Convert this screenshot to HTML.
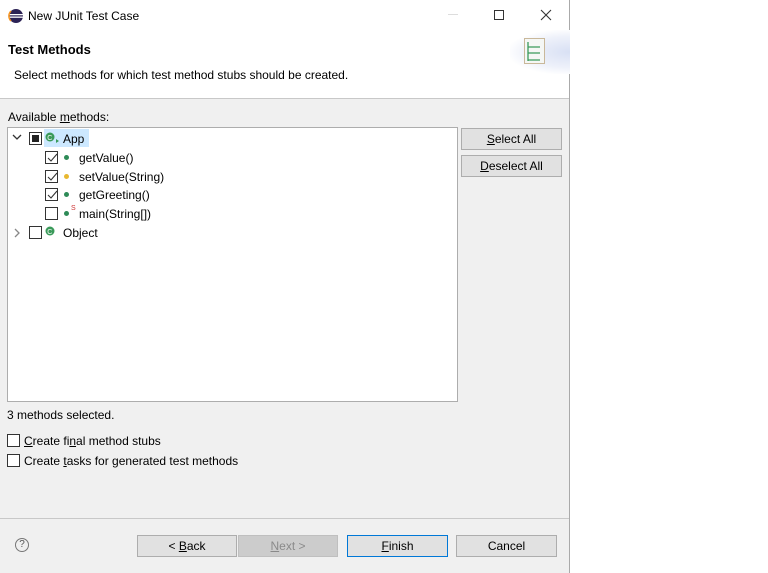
<!DOCTYPE html><html><head><style>
*{margin:0;padding:0;box-sizing:border-box}
body{width:768px;height:573px;background:#fff;font-family:"Liberation Sans",sans-serif;font-size:12px;color:#000;position:relative;overflow:hidden}
.a{position:absolute;white-space:nowrap}
.win{position:absolute;left:0;top:0;width:570px;height:573px;background:#f0f0f0;border-right:1px solid #aaa}
.cb{position:absolute;width:13px;height:13px;border:1px solid #333;background:#fff}
.btn{position:absolute;height:22px;background:#e1e1e1;border:1px solid #adadad;text-align:center;line-height:20px}
.dot{position:absolute;width:5px;height:5px;border-radius:50%;background:#2e8b57}
.ck{position:absolute;left:1px;top:1px}
</style></head><body>
<div class="win">
<div class="a" style="left:0;top:0;width:569px;height:99px;background:#fff;border-bottom:1px solid #c8c8c8"></div>
<svg class="a" style="left:8px;top:8px" width="16" height="16"><circle cx="8" cy="8" r="7" fill="#2c2255"/><rect x="1" y="6" width="14" height="1.3" fill="#fff"/><rect x="1" y="8.5" width="14" height="1.3" fill="#fff"/><path d="M3 3 A7 7 0 0 0 3 13" stroke="#f7941e" stroke-width="1.5" fill="none"/></svg>
<div class="a" style="left:28px;top:9px">New JUnit Test Case</div>
<div class="a" style="left:448px;top:14px;width:10px;height:1px;background:#ddd"></div>
<div class="a" style="left:494px;top:10px;width:10px;height:10px;border:1px solid #333"></div>
<svg class="a" style="left:540px;top:9px" width="12" height="12"><path d="M1 1L11 11M11 1L1 11" stroke="#333" stroke-width="1.1"/></svg>
<div class="a" style="left:510px;top:30px;width:60px;height:44px;background:radial-gradient(ellipse at 100% 50%,#d8e0f4 0%,#eef1fa 50%,#fff 75%)"></div>
<div class="a" style="left:524px;top:38px;width:21px;height:26px;border:1px solid #c9b89a;background:#f5f7f5"></div>
<svg class="a" style="left:526px;top:41px" width="18" height="22"><path d="M2 1V20M2 6H14M2 12H14M2 19H14" stroke="#3a9a5a" stroke-width="1.3" fill="none"/></svg>
<div class="a" style="left:8px;top:42px;font-weight:bold;font-size:13px">Test Methods</div>
<div class="a" style="left:14px;top:68px">Select methods for which test method stubs should be created.</div>
<div class="a" style="left:8px;top:110px">Available <u>m</u>ethods:</div>
<div class="a" style="left:7px;top:127px;width:451px;height:275px;background:#fff;border:1px solid #adadad"></div>
<svg class="a" style="left:12px;top:134px" width="10" height="7"><path d="M1 1L5 5L9 1" stroke="#333" stroke-width="1.3" fill="none"/></svg>
<div class="cb" style="left:29px;top:132px"></div><div class="a" style="left:32px;top:135px;width:7px;height:7px;background:#222"></div>
<div class="a" style="left:44px;top:129px;width:45px;height:18px;background:#cce8ff"></div>
<svg class="a" style="left:45px;top:132px" width="16" height="12"><circle cx="5" cy="5" r="4.5" fill="#3a9a5a"/><text x="2.3" y="8" font-size="7" fill="#fff" font-family="Liberation Sans">C</text><path d="M11 7L14 9L11 11Z" fill="#3a9a5a"/></svg>
<div class="a" style="left:63px;top:132px">App</div>
<div class="cb" style="left:45px;top:151px"><svg class="ck" width="10" height="10"><path d="M1 5L4 8L10 1" stroke="#333" stroke-width="1.1" fill="none"/></svg></div><div class="dot" style="left:64px;top:155px"></div><div class="a" style="left:79px;top:151px">getValue()</div>
<div class="cb" style="left:45px;top:170px"><svg class="ck" width="10" height="10"><path d="M1 5L4 8L10 1" stroke="#333" stroke-width="1.1" fill="none"/></svg></div><div class="dot" style="left:64px;top:174px;background:#e8b830"></div><div class="a" style="left:79px;top:170px">setValue(String)</div>
<div class="cb" style="left:45px;top:188px"><svg class="ck" width="10" height="10"><path d="M1 5L4 8L10 1" stroke="#333" stroke-width="1.1" fill="none"/></svg></div><div class="dot" style="left:64px;top:192px"></div><div class="a" style="left:79px;top:188px">getGreeting()</div>
<div class="cb" style="left:45px;top:207px"></div><div class="dot" style="left:64px;top:211px"></div><div class="a" style="left:71px;top:205px;font-size:7px;color:#c33">S</div><div class="a" style="left:79px;top:207px">main(String[])</div>
<svg class="a" style="left:14px;top:228px" width="7" height="10"><path d="M1 1L5 5L1 9" stroke="#888" stroke-width="1.3" fill="none"/></svg>
<div class="cb" style="left:29px;top:226px"></div>
<svg class="a" style="left:45px;top:226px" width="11" height="11"><circle cx="5" cy="5" r="4.5" fill="#3a9a5a"/><text x="2.3" y="8" font-size="7" fill="#fff" font-family="Liberation Sans">C</text></svg>
<div class="a" style="left:63px;top:226px">Object</div>
<div class="btn" style="left:461px;top:128px;width:101px"><u>S</u>elect All</div>
<div class="btn" style="left:461px;top:155px;width:101px"><u>D</u>eselect All</div>
<div class="a" style="left:7px;top:408px">3 methods selected.</div>
<div class="cb" style="left:7px;top:434px"></div><div class="a" style="left:24px;top:434px"><u>C</u>reate fi<u>n</u>al method stubs</div>
<div class="cb" style="left:7px;top:454px"></div><div class="a" style="left:24px;top:454px">Create <u>t</u>asks for generated test methods</div>
<div class="a" style="left:0;top:518px;width:569px;height:1px;background:#c8c8c8"></div>
<div class="a" style="left:15px;top:538px;width:14px;height:14px;border:1px solid #777;border-radius:50%;font-size:10px;text-align:center;line-height:12px;color:#555">?</div>
<div class="btn" style="left:137px;top:535px;width:100px">&lt; <u>B</u>ack</div>
<div class="btn" style="left:238px;top:535px;width:100px;background:#ccc;border-color:#bfbfbf;color:#8a8a8a"><u>N</u>ext &gt;</div>
<div class="btn" style="left:347px;top:535px;width:101px;border:1px solid #0078d7"><u>F</u>inish</div>
<div class="btn" style="left:456px;top:535px;width:101px">Cancel</div>
</div>
</body></html>
